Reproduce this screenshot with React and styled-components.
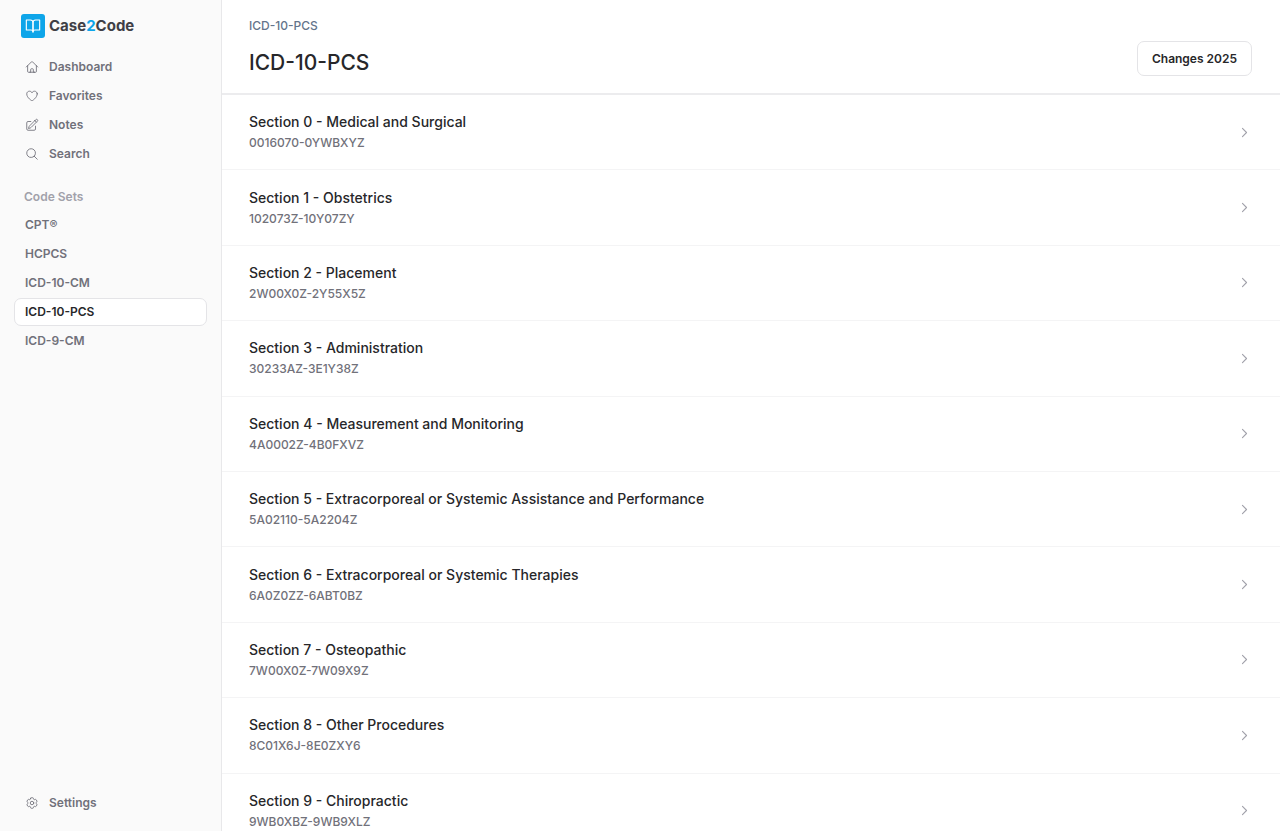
import React from "react";
import styled, { createGlobalStyle } from "styled-components";
import {
  HiOutlineHome,
  HiOutlineHeart,
  HiOutlinePencilSquare,
  HiOutlineMagnifyingGlass,
  HiOutlineCog6Tooth,
  HiOutlineChevronRight,
} from "react-icons/hi2";
import { FiBookOpen } from "react-icons/fi";

const GlobalStyle = createGlobalStyle`
  *, *::before, *::after { box-sizing: border-box; }
  body {
    margin: 0;
    background: #fff;
    color: #27272a;
    font-family: Inter, "Liberation Sans", sans-serif;
    font-size: 12px;
    line-height: 20px;
    -webkit-font-smoothing: antialiased;
  }
`;

const Layout = styled.div`
  display: flex;
  height: 100vh;
`;

const Sidebar = styled.aside`
  display: flex;
  flex-direction: column;
  flex: none;
  width: 222px;
  padding: 14px;
  background: #fafafa;
  border-right: 1px solid #e8e8ea;
`;

const Brand = styled.a`
  display: flex;
  align-items: center;
  gap: 4px;
  margin-bottom: 15px;
  padding-left: 7px;
  color: #3f3f46;
  font-size: 15px;
  font-weight: 700;
  line-height: 24px;
  text-decoration: none;
`;

const BrandMark = styled.span`
  display: flex;
  align-items: center;
  justify-content: center;
  width: 24px;
  height: 24px;
  border-radius: 3px;
  background: #0ea5e9;
  color: #fff;

  svg {
    width: 16px;
    height: 16px;
    stroke-width: 1.7;
  }
`;

const BrandAccent = styled.span`
  color: #0ea5e9;
`;

const NavList = styled.ul`
  display: flex;
  flex-direction: column;
  gap: 1px;
  margin: 0;
  padding: 0;
  list-style: none;
`;

const NavLink = styled.a`
  display: flex;
  align-items: center;
  gap: 10px;
  height: 28px;
  padding: 0 10px;
  border: 1px solid ${({ $active }) => ($active ? "#e4e4e7" : "transparent")};
  border-radius: 7px;
  background: ${({ $active }) => ($active ? "#fff" : "transparent")};
  color: ${({ $active }) => ($active ? "#27272a" : "#71717a")};
  font-weight: 600;
  text-decoration: none;

  svg {
    flex: none;
    width: 14px;
    height: 14px;
  }
`;

const GroupTitle = styled.h2`
  margin: 19px 0 4px;
  padding: 0 10px;
  color: #a1a1aa;
  font-size: 12px;
  font-weight: 600;
  line-height: 20px;
`;

const SidebarFooter = styled.div`
  margin-top: auto;
`;

const Main = styled.main`
  display: flex;
  flex-direction: column;
  flex: 1;
  min-width: 0;
  overflow: hidden;
`;

const Header = styled.header`
  display: flex;
  align-items: flex-end;
  justify-content: space-between;
  flex: none;
  padding: 16px 28px 17px 27px;
  border-bottom: 2px solid #ececee;
`;

const Crumb = styled.a`
  display: block;
  color: #64748b;
  font-weight: 500;
  text-decoration: none;
`;

const Title = styled.h1`
  margin: 14px 0 0;
  color: #27272a;
  font-size: 21px;
  font-weight: 500;
  line-height: 26px;
`;

const OutlineButton = styled.button`
  height: 35px;
  padding: 0 14px;
  border: 1px solid #e4e4e7;
  border-radius: 7px;
  background: #fff;
  color: #27272a;
  font: inherit;
  font-weight: 600;
`;

const SectionList = styled.ul`
  display: grid;
  grid-auto-rows: 1fr;
  flex: none;
  min-height: 754px;
  margin: 0;
  padding: 0;
  list-style: none;
`;

const SectionItem = styled.li`
  display: flex;
  border-bottom: 1px solid #f4f4f5;
`;

const SectionLink = styled.a`
  display: flex;
  align-items: center;
  justify-content: space-between;
  flex: 1;
  padding: 0 29px 0 27px;
  color: #27272a;
  text-decoration: none;

  svg {
    width: 13px;
    height: 13px;
    stroke-width: 2;
    color: #a1a1aa;
  }
`;

const SectionName = styled.span`
  display: block;
  font-size: 14px;
  font-weight: 500;
  line-height: 22px;
`;

const SectionRange = styled.span`
  display: block;
  color: #71717a;
  font-weight: 500;
  line-height: 20px;
`;

const mainNav = [
  ["Dashboard", HiOutlineHome],
  ["Favorites", HiOutlineHeart],
  ["Notes", HiOutlinePencilSquare],
  ["Search", HiOutlineMagnifyingGlass],
];

const codeSets = ["CPT®", "HCPCS", "ICD-10-CM", "ICD-10-PCS", "ICD-9-CM"];

const sections = [
  ["Section 0 - Medical and Surgical", "0016070-0YWBXYZ"],
  ["Section 1 - Obstetrics", "102073Z-10Y07ZY"],
  ["Section 2 - Placement", "2W00X0Z-2Y55X5Z"],
  ["Section 3 - Administration", "30233AZ-3E1Y38Z"],
  ["Section 4 - Measurement and Monitoring", "4A0002Z-4B0FXVZ"],
  ["Section 5 - Extracorporeal or Systemic Assistance and Performance", "5A02110-5A2204Z"],
  ["Section 6 - Extracorporeal or Systemic Therapies", "6A0Z0ZZ-6ABT0BZ"],
  ["Section 7 - Osteopathic", "7W00X0Z-7W09X9Z"],
  ["Section 8 - Other Procedures", "8C01X6J-8E0ZXY6"],
  ["Section 9 - Chiropractic", "9WB0XBZ-9WB9XLZ"],
];

export default function App() {
  return (
    <Layout>
      <GlobalStyle />
      <Sidebar>
        <Brand href="#">
          <BrandMark>
            <FiBookOpen aria-hidden="true" />
          </BrandMark>
          <span>
            Case<BrandAccent>2</BrandAccent>Code
          </span>
        </Brand>
        <nav aria-label="Main">
          <NavList>
            {mainNav.map(([label, Icon]) => (
              <li key={label}>
                <NavLink href="#">
                  <Icon aria-hidden="true" />
                  {label}
                </NavLink>
              </li>
            ))}
          </NavList>
        </nav>
        <nav aria-labelledby="code-sets">
          <GroupTitle id="code-sets">Code Sets</GroupTitle>
          <NavList>
            {codeSets.map((label) => (
              <li key={label}>
                <NavLink
                  href="#"
                  $active={label === "ICD-10-PCS"}
                  aria-current={label === "ICD-10-PCS" ? "page" : undefined}
                >
                  {label}
                </NavLink>
              </li>
            ))}
          </NavList>
        </nav>
        <SidebarFooter>
          <NavLink href="#">
            <HiOutlineCog6Tooth aria-hidden="true" />
            Settings
          </NavLink>
        </SidebarFooter>
      </Sidebar>
      <Main>
        <Header>
          <div>
            <Crumb href="#">ICD-10-PCS</Crumb>
            <Title>ICD-10-PCS</Title>
          </div>
          <OutlineButton type="button">Changes 2025</OutlineButton>
        </Header>
        <SectionList>
          {sections.map(([name, range]) => (
            <SectionItem key={name}>
              <SectionLink href="#">
                <span>
                  <SectionName>{name}</SectionName>
                  <SectionRange>{range}</SectionRange>
                </span>
                <HiOutlineChevronRight aria-hidden="true" />
              </SectionLink>
            </SectionItem>
          ))}
        </SectionList>
      </Main>
    </Layout>
  );
}
